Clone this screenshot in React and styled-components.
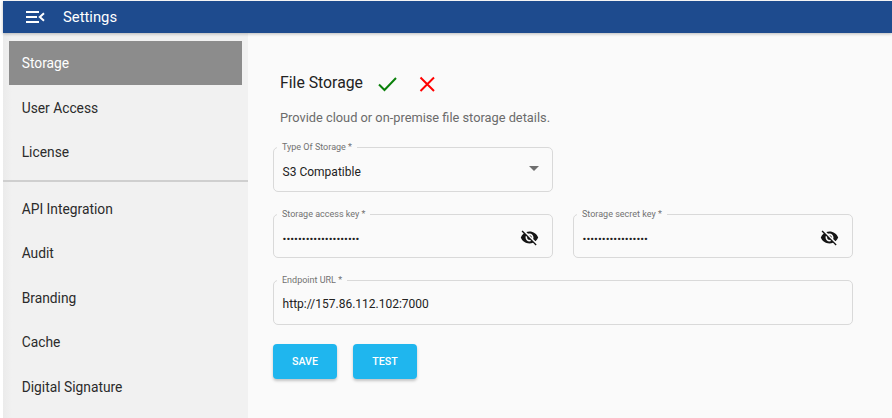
import React from "react";
import styled, { createGlobalStyle } from "styled-components";

const Global = createGlobalStyle`
  html, body { margin: 0; padding: 0; background: #fff; }
  body { font-family: Roboto, "Liberation Sans", sans-serif; }
  #root { width: 892px; height: 418px; overflow: hidden; }
`;

const Page = styled.div`
  width: 892px;
  height: 418px;
  padding: 1px 0 0 3px;
  box-sizing: border-box;
  display: flex;
  flex-direction: column;
  overflow: hidden;
`;

const TopBar = styled.header`
  height: 32px;
  flex: none;
  background: #1e4b8e;
  display: flex;
  align-items: center;
  padding-left: 23px;
  gap: 17px;
  color: #fff;
  font-size: 14.8px;
  box-shadow: 0 1px 3px rgba(0, 0, 0, 0.25);
  position: relative;
  z-index: 1;
`;

const Body = styled.div`
  flex: 1;
  display: flex;
  min-height: 0;
`;

const Sidebar = styled.nav`
  width: 245px;
  flex: none;
  background: linear-gradient(to right, #ebebeb, #f1f1f1 9px);
  padding-top: 8px;
  overflow: hidden;
`;

const NavGroup = styled.div`
  padding: 0 6px;
`;

const NavItem = styled.div`
  height: ${(p) => p.$h || 44.5}px;
  display: flex;
  align-items: center;
  padding-left: 12.7px;
  font-size: 13.8px;
  color: ${(p) => (p.$active ? "#fff" : "#2b2b2b")};
  background: ${(p) => (p.$active ? "#8c8c8c" : "transparent")};
`;

const NavDivider = styled.div`
  height: 2px;
  background: #cfcfcf;
  margin: 6px 0 4.7px;
`;

const Main = styled.main`
  flex: 1;
  background: #fafafa;
  padding: 35px 0 0 25px;
  min-width: 0;
`;

const TitleRow = styled.div`
  display: flex;
  align-items: center;
  height: 28px;
  margin-left: 7px;
`;

const Title = styled.h1`
  margin: 0 12px 0 0;
  font-size: 15.8px;
  font-weight: 400;
  color: #222;
`;

const IconSlot = styled.span`
  display: inline-flex;
  width: 24px;
  height: 24px;
  margin-right: ${(p) => p.$gap || 0}px;
  margin-top: 3px;
`;

const Subtitle = styled.p`
  margin: 12px 0 0 7px;
  font-size: 12.8px;
  line-height: 20px;
  color: #6b6b6b;
`;

const FormRow = styled.div`
  display: flex;
  gap: 20px;
  margin-top: ${(p) => p.$top}px;
`;

const Field = styled.div`
  position: relative;
  width: ${(p) => p.$w}px;
  height: ${(p) => p.$h}px;
  box-sizing: border-box;
  border: 1px solid #d9d9d9;
  border-radius: 5px;
  display: flex;
  align-items: center;
  justify-content: space-between;
  padding: ${(p) => p.$pt || 2}px 13px 0 8.6px;
  font-size: 12px;
  color: #222;
`;

const FieldLabel = styled.label`
  position: absolute;
  left: 3px;
  top: -7px;
  padding: 0 5px;
  background: #fafafa;
  font-size: 9px;
  line-height: 12px;
  color: #727272;
  white-space: nowrap;
`;

const Dots = styled.span`
  font-family: Roboto, sans-serif;
  font-size: 11.4px;
  margin-top: 3px;
`;

const Caret = styled.span`
  width: 0;
  height: 0;
  border-left: 5px solid transparent;
  border-right: 5px solid transparent;
  border-top: 5px solid #6f6f6f;
  margin-top: -7px;
`;

const Actions = styled.div`
  display: flex;
  gap: 16px;
  margin-top: 19px;
`;

const Button = styled.button`
  width: 64px;
  height: 35px;
  border: 0;
  border-radius: 4px;
  background: #1fb6ee;
  color: #fff;
  font-family: inherit;
  font-size: 10.7px;
  font-weight: 500;
  box-shadow: 0 2px 3px rgba(0, 0, 0, 0.22);
`;

const EyeOff = () => (
  <svg width="19" height="19" viewBox="0 0 24 24" fill="#141414" style={{ flex: "none" }}>
    <path d="M12 7c2.76 0 5 2.24 5 5 0 .65-.13 1.26-.36 1.83l2.92 2.92c1.51-1.26 2.7-2.89 3.43-4.75-1.73-4.39-6-7.5-11-7.5-1.4 0-2.74.25-3.98.7l2.16 2.16C10.74 7.13 11.35 7 12 7zM2 4.27l2.28 2.28.46.46C3.08 8.3 1.78 10.02 1 12c1.73 4.39 6 7.5 11 7.5 1.55 0 3.03-.3 4.38-.84l.42.42L19.73 22 21 20.73 3.27 3 2 4.27zM7.53 9.8l1.55 1.55c-.05.21-.08.43-.08.65 0 1.66 1.34 3 3 3 .22 0 .44-.03.65-.08l1.55 1.55c-.67.33-1.41.53-2.2.53-2.76 0-5-2.24-5-5 0-.79.2-1.53.53-2.2zm4.31-.78l3.15 3.15.02-.16c0-1.66-1.34-3-3-3l-.17.01z" />
  </svg>
);

export default function App() {
  return (
    <Page>
      <Global />
      <TopBar>
        <svg width="20" height="14" viewBox="0 0 20 14" fill="none" stroke="#fff" strokeWidth="2">
          <path d="M0 2h13M0 7h11M0 12h13" />
          <path d="M18 3.200 13.800 7l4.200 3.800" />
        </svg>
        <span>Settings</span>
      </TopBar>
      <Body>
        <Sidebar>
          <NavGroup>
            <NavItem $active $h={44}>Storage</NavItem>
            <NavItem $h={45}>User Access</NavItem>
            <NavItem $h={44}>License</NavItem>
          </NavGroup>
          <NavDivider />
          <NavGroup>
            <NavItem>API Integration</NavItem>
            <NavItem>Audit</NavItem>
            <NavItem>Branding</NavItem>
            <NavItem>Cache</NavItem>
            <NavItem>Digital Signature</NavItem>
          </NavGroup>
        </Sidebar>
        <Main>
          <TitleRow>
            <Title>File Storage</Title>
            <IconSlot $gap={16}>
              <svg width="24" height="24" viewBox="0 0 24 24" fill="none" stroke="#0a800a" strokeWidth="2">
                <path d="M4 12.500 9.500 18 21 6" />
              </svg>
            </IconSlot>
            <IconSlot>
              <svg width="24" height="24" viewBox="0 0 24 24" fill="none" stroke="#ff0000" strokeWidth="2">
                <path d="M5.500 5.500 19 19M19 5.500 5.500 19" />
              </svg>
            </IconSlot>
          </TitleRow>
          <Subtitle>Provide cloud or on-premise file storage details.</Subtitle>
          <FormRow $top={19}>
            <Field $w={280} $h={45} $pt={4}>
              <FieldLabel>Type Of Storage *</FieldLabel>
              <span>S3 Compatible</span>
              <Caret />
            </Field>
          </FormRow>
          <FormRow $top={22}>
            <Field $w={280} $h={44}>
              <FieldLabel>Storage access key *</FieldLabel>
              <Dots>••••••••••••••••••••</Dots>
              <EyeOff />
            </Field>
            <Field $w={280} $h={44}>
              <FieldLabel>Storage secret key *</FieldLabel>
              <Dots>•••••••••••••••••</Dots>
              <EyeOff />
            </Field>
          </FormRow>
          <FormRow $top={22}>
            <Field $w={580} $h={45}>
              <FieldLabel>Endpoint URL *</FieldLabel>
              <span>http://157.86.112.102:7000</span>
            </Field>
          </FormRow>
          <Actions>
            <Button>SAVE</Button>
            <Button>TEST</Button>
          </Actions>
        </Main>
      </Body>
    </Page>
  );
}
